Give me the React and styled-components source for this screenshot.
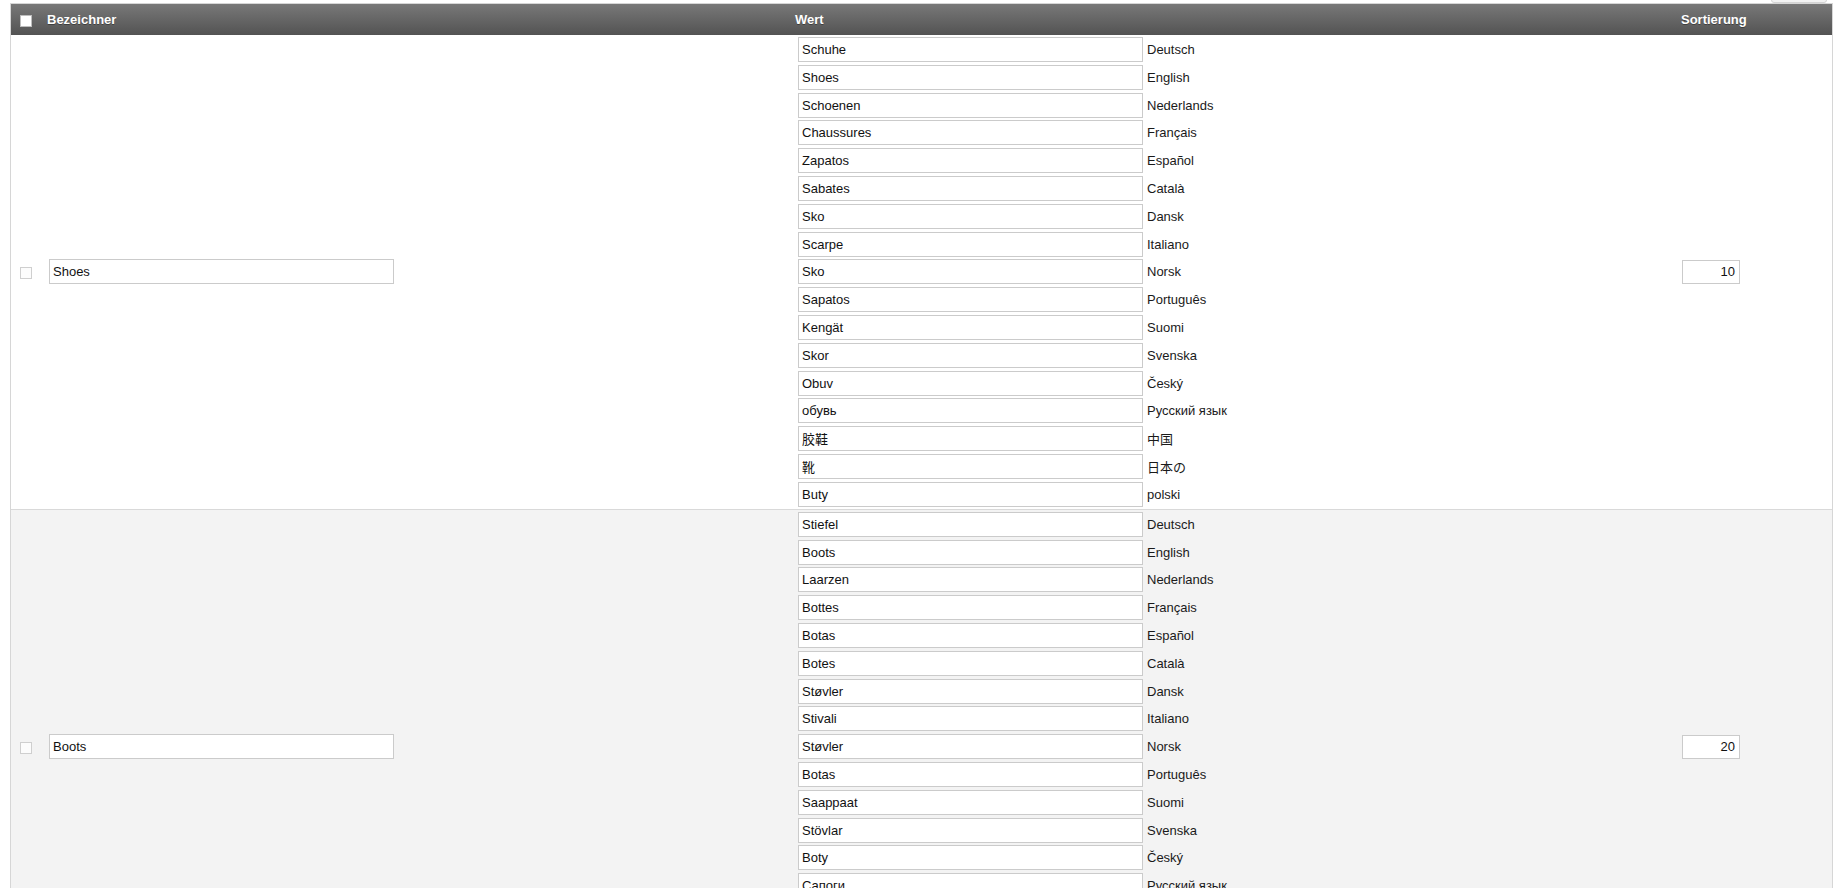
import React from "react";
import styled, { createGlobalStyle } from "styled-components";

const Global = createGlobalStyle`
  html, body { margin: 0; padding: 0; overflow: hidden; background: #fff; }
  body { font-family: "Liberation Sans", Arial, "Noto Sans CJK SC", sans-serif; font-size: 13px; color: #1a1a1a; }
`;

const Page = styled.div`
  width: 1839px;
  height: 888px;
  overflow: hidden;
`;

const TopBar = styled.div`
  height: 3px;
  display: flex;
  justify-content: flex-end;
  align-items: flex-end;
  padding-right: 12px;
  overflow: hidden;
`;

const TopButton = styled.div`
  width: 54px;
  height: 20px;
  flex: none;
  border: 1px solid #d4d4d4;
  border-radius: 0 0 3px 3px;
  background: #f2f2f2;
`;

const Table = styled.div`
  margin-left: 10px;
  width: 1821px;
  border: 1px solid #d6d6d6;
  border-bottom: none;
`;

const cols = "29px 751px 886px 1fr";

const HeaderRow = styled.div`
  display: grid;
  grid-template-columns: ${cols};
  height: 31px;
  align-items: center;
  background: linear-gradient(#787878, #535353);
`;

const HeadCell = styled.div`
  padding-left: ${(p) => p.$pad}px;
  color: #fff;
  font-weight: bold;
  font-size: 13px;
  text-shadow: 0 1px 0 rgba(0, 0, 0, 0.35);
  display: flex;
  align-items: center;
`;

const HeadCheck = styled.span`
  display: block;
  width: 10px;
  height: 10px;
  margin-top: 3px;
  background: #fff;
  border: 1px solid #bdbdbd;
`;

const BodyRow = styled.div`
  display: grid;
  grid-template-columns: ${cols};
  align-items: center;
  padding: 2px 0;
  background: ${(p) => (p.$alt ? "#f3f3f3" : "#fff")};
  border-top: ${(p) => (p.$first ? "none" : "1px solid #d9d9d9")};
`;

const Cell = styled.div`
  padding-left: ${(p) => p.$pad}px;
  display: flex;
  align-items: center;
`;

const RowCheck = styled.span`
  display: block;
  width: 10px;
  height: 10px;
  margin-top: 3px;
  background: #fcfcfc;
  border: 1px solid #cfcfcf;
`;

const TextBox = styled.div`
  box-sizing: border-box;
  width: ${(p) => p.$w}px;
  height: ${(p) => p.$h || 25}px;
  border: 1px solid #cbcbcb;
  background: #fff;
  padding: 0 ${(p) => (p.$right ? 4 : 3)}px;
  display: flex;
  align-items: center;
  justify-content: ${(p) => (p.$right ? "flex-end" : "flex-start")};
  font-size: 13px;
  color: #111;
  white-space: nowrap;
  overflow: hidden;
`;

const ValueList = styled.div`
  display: flex;
  flex-direction: column;
  gap: 2.8px;
`;

const ValueLine = styled.div`
  display: flex;
  align-items: center;
`;

const LangLabel = styled.span`
  margin-left: 4px;
  font-size: 13px;
  color: #1a1a1a;
  white-space: nowrap;
`;

const rows = [
  {
    label: "Shoes",
    sort: "10",
    values: [
      ["Schuhe", "Deutsch"],
      ["Shoes", "English"],
      ["Schoenen", "Nederlands"],
      ["Chaussures", "Français"],
      ["Zapatos", "Español"],
      ["Sabates", "Català"],
      ["Sko", "Dansk"],
      ["Scarpe", "Italiano"],
      ["Sko", "Norsk"],
      ["Sapatos", "Português"],
      ["Kengät", "Suomi"],
      ["Skor", "Svenska"],
      ["Obuv", "Český"],
      ["обувь", "Русский язык"],
      ["胶鞋", "中国"],
      ["靴", "日本の"],
      ["Buty", "polski"],
    ],
  },
  {
    label: "Boots",
    sort: "20",
    values: [
      ["Stiefel", "Deutsch"],
      ["Boots", "English"],
      ["Laarzen", "Nederlands"],
      ["Bottes", "Français"],
      ["Botas", "Español"],
      ["Botes", "Català"],
      ["Støvler", "Dansk"],
      ["Stivali", "Italiano"],
      ["Støvler", "Norsk"],
      ["Botas", "Português"],
      ["Saappaat", "Suomi"],
      ["Stövlar", "Svenska"],
      ["Boty", "Český"],
      ["Сапоги", "Русский язык"],
      ["靴子", "中国"],
      ["ブーツ", "日本の"],
      ["Buty", "polski"],
    ],
  },
];

export default function App() {
  return (
    <Page>
      <Global />
      <TopBar>
        <TopButton />
      </TopBar>
      <Table>
        <HeaderRow>
          <HeadCell $pad={9}>
            <HeadCheck />
          </HeadCell>
          <HeadCell $pad={7}>Bezeichner</HeadCell>
          <HeadCell $pad={4}>Wert</HeadCell>
          <HeadCell $pad={4}>Sortierung</HeadCell>
        </HeaderRow>
        {rows.map((r, i) => (
          <BodyRow key={r.label} $alt={i % 2 === 1} $first={i === 0}>
            <Cell $pad={9}>
              <RowCheck />
            </Cell>
            <Cell $pad={9}>
              <TextBox $w={345}>{r.label}</TextBox>
            </Cell>
            <Cell $pad={7}>
              <ValueList>
                {r.values.map(([v, lang], j) => (
                  <ValueLine key={j}>
                    <TextBox $w={345}>{v}</TextBox>
                    <LangLabel>{lang}</LangLabel>
                  </ValueLine>
                ))}
              </ValueList>
            </Cell>
            <Cell $pad={5}>
              <TextBox $w={58} $h={24} $right>
                {r.sort}
              </TextBox>
            </Cell>
          </BodyRow>
        ))}
      </Table>
    </Page>
  );
}
